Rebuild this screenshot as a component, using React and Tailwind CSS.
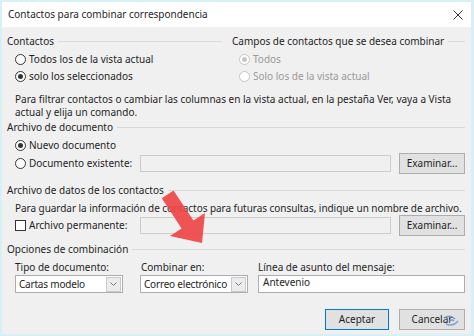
import React from "react";

const Radio = ({ checked, disabled }) => (
    <span
        className={`flex h-[11px] w-[11px] shrink-0 items-center justify-center rounded-full border bg-white ${
            disabled ? "border-[#c6c6c6]" : "border-[#333333]"
        }`}
    >
        {checked && <span className={`h-[5px] w-[5px] rounded-full ${disabled ? "bg-[#c6c6c6]" : "bg-[#333333]"}`}></span>}
    </span>
);

const GroupLabel = ({ children, className = "" }) => (
    <div className={`flex h-[14px] items-center ${className}`}>
        <span className="whitespace-nowrap">{children}</span>
        <span className="ml-[4px] h-px flex-1 bg-[#d5dadd]"></span>
    </div>
);

const Button = ({ children, primary, className = "" }) => (
    <div
        className={`flex h-[21px] items-center justify-center border bg-[#e1e1e1] ${
            primary ? "border-[#0078d7]" : "border-[#adadad]"
        } ${className}`}
    >
        {children}
    </div>
);

const Select = ({ value }) => (
    <div className="flex h-[18px] w-[108px] items-center border border-[#abadb3] bg-white">
        <span className="flex-1 overflow-hidden pl-[3px] whitespace-nowrap tracking-[-0.2px]">{value}</span>
        <span className="mr-px flex h-[15px] w-[15px] shrink-0 items-center justify-center border border-[#c9c9c9] bg-[#ececec]">
            <svg width="7" height="4" viewBox="0 0 7 4">
                <path d="M0.5 0.5 L3.5 3.5 L6.5 0.5" fill="none" stroke="#777" strokeWidth="1" />
            </svg>
        </span>
    </div>
);

export default function App() {
    return (
        <div className="relative h-[336px] w-[474px] bg-[#d7f0f6] pt-[2px] pr-[3px] pb-[2px] pl-[2px] font-['Noto_Sans',sans-serif] text-[10px] text-[#1e1e1e]">
            <div className="flex h-full flex-col">
                {/* Title bar */}
                <div className="flex h-[25px] shrink-0 items-center justify-between bg-white pr-[8px] pl-[6px]">
                    <span className="text-[10px]">Contactos para combinar correspondencia</span>
                    <svg width="10" height="10" viewBox="0 0 10 10">
                        <path d="M0.5 0.5 L9.5 9.5 M9.5 0.5 L0.5 9.5" stroke="#333" strokeWidth="1" />
                    </svg>
                </div>

                {/* Body */}
                <div className="flex-1 bg-[#f0f0f0] pt-[7px] pr-[6px] pl-[5px]">
                    <div className="flex">
                        <div className="w-[215px]">
                            <GroupLabel>Contactos</GroupLabel>
                            <div className="mt-[3px] flex h-[16px] items-center gap-[3px] pl-[8px]">
                                <Radio />
                                <span>Todos los de la vista actual</span>
                            </div>
                            <div className="mt-[1px] flex h-[16px] items-center gap-[3px] pl-[8px]">
                                <Radio checked />
                                <span>solo los seleccionados</span>
                            </div>
                        </div>
                        <div className="ml-[10px] flex-1">
                            <GroupLabel>Campos de contactos que se desea combinar</GroupLabel>
                            <div className="mt-[3px] flex h-[16px] items-center gap-[3px] pl-[7px] text-[#9a9a9a]">
                                <Radio checked disabled />
                                <span>Todos</span>
                            </div>
                            <div className="mt-[1px] flex h-[16px] items-center gap-[3px] pl-[7px] text-[#9a9a9a]">
                                <Radio disabled />
                                <span>Solo los de la vista actual</span>
                            </div>
                        </div>
                    </div>

                    <p className="mt-[9px] pl-[8px] leading-[13px] whitespace-nowrap">
                        Para filtrar contactos o cambiar las columnas en la vista actual, en la pestaña Ver, vaya a Vista
                        <br />
                        actual y elija un comando.
                    </p>

                    <GroupLabel className="mt-[1px]">Archivo de documento</GroupLabel>
                    <div className="mt-[3px] flex h-[16px] items-center gap-[3px] pl-[8px]">
                        <Radio checked />
                        <span>Nuevo documento</span>
                    </div>
                    <div className="mt-[1px] flex h-[18px] items-center">
                        <div className="flex w-[133px] shrink-0 items-center gap-[3px] pl-[8px]">
                            <Radio />
                            <span>Documento existente:</span>
                        </div>
                        <div className="h-[17px] w-[252px] border border-[#cccccc] bg-[#f0f0f0]"></div>
                        <Button className="ml-[8px] w-[66px]">Examinar...</Button>
                    </div>

                    <GroupLabel className="mt-[11px]">Archivo de datos de los contactos</GroupLabel>
                    <div className="mt-[4px] flex h-[14px] items-center pl-[8px] whitespace-nowrap tracking-[-0.05px]">
                        Para guardar la información de contactos para futuras consultas, indique un nombre de archivo.
                    </div>
                    <div className="mt-[1px] flex h-[18px] items-center">
                        <div className="flex w-[133px] shrink-0 items-center gap-[3px] pl-[8px]">
                            <span className="h-[11px] w-[11px] shrink-0 border border-[#333333] bg-white"></span>
                            <span>Archivo permanente:</span>
                        </div>
                        <div className="h-[17px] w-[252px] border border-[#cccccc] bg-[#f0f0f0]"></div>
                        <Button className="ml-[8px] w-[66px]">Examinar...</Button>
                    </div>

                    <GroupLabel className="mt-[8px]">Opciones de combinación</GroupLabel>
                    <div className="mt-[4px] flex pl-[8px]">
                        <div className="w-[108px]">
                            <div className="flex h-[14px] items-center">Tipo de documento:</div>
                            <div className="mt-[1px]">
                                <Select value="Cartas modelo" />
                            </div>
                        </div>
                        <div className="ml-[17px] w-[109px]">
                            <div className="flex h-[14px] items-center pl-px">Combinar en:</div>
                            <div className="mt-[1px]">
                                <Select value="Correo electrónico" />
                            </div>
                        </div>
                        <div className="ml-[9px] flex-1">
                            <div className="flex h-[14px] items-center">Línea de asunto del mensaje:</div>
                            <div className="mt-[1px] h-[18px] border border-[#abadb3] bg-white pl-[4px] leading-[13px]">
                                Antevenio
                            </div>
                        </div>
                    </div>

                    <div className="mt-[16px] flex justify-end gap-[10px]">
                        <Button primary className="w-[64px]">Aceptar</Button>
                        <Button className="w-[66px]">Cancelar</Button>
                    </div>
                </div>
            </div>

            {/* red arrow overlay */}
            <svg className="pointer-events-none absolute top-0 left-0" width="474" height="336" viewBox="0 0 474 336">
                <polygon
                    points="161.8,198.2 173.6,190.4 193.4,220.6 205,213 202,243 170,236 181.6,228.4"
                    fill="#ef4747"
                    fillOpacity="0.92"
                />
                {/* watermark swirl */}
                <path d="M444 318 q6 -4 11 1 M446 324 q7 3 12 -3 M449 321 q3 -2 5 0" fill="none" stroke="#5b8fd0" strokeWidth="1.5" opacity="0.8" />
            </svg>
        </div>
    );
}
